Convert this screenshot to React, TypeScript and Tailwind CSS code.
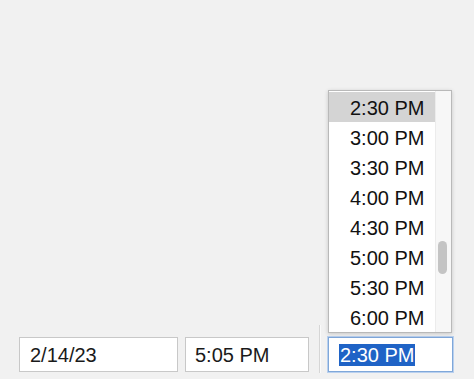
import React from "react";

const times = [
	"2:30 PM",
	"3:00 PM",
	"3:30 PM",
	"4:00 PM",
	"4:30 PM",
	"5:00 PM",
	"5:30 PM",
	"6:00 PM",
];

const font = { fontFamily: '"Liberation Sans", Arial, sans-serif' };

export default function App() {
	return (
		<div
			className="h-[379px] w-[474px] bg-[#f1f1f1] flex flex-col justify-end overflow-hidden"
			style={font}
		>
			<div className="flex items-start pl-[19px] pb-[6px]">
				<div className="mt-[12px] w-[159px] h-[35px] bg-white border border-[#c8c8c8] flex items-center pl-[10px] text-[20px] text-[#1a1a1a]">
					2/14/23
				</div>
				<div className="mt-[12px] ml-[7px] w-[124px] h-[35px] bg-white border border-[#c8c8c8] flex items-center pl-[9px] text-[20px] text-[#1a1a1a]">
					5:05 PM
				</div>
				<div className="ml-[10px] w-px h-[48px] bg-[#d6d6d6]"></div>
				<div className="w-px h-[48px] bg-[#fafafa]"></div>
				<div className="relative ml-[7px] mt-[12px]">
					<div className="absolute left-0 bottom-[39px] w-[124px] h-[243px] bg-white border border-[#b9b9b9] shadow-[0_1px_4px_rgba(0,0,0,0.18)] flex">
						<div className="flex-1 flex flex-col pt-px">
							{times.map((t, i) => (
								<div
									key={t}
									className={`h-[30px] flex items-center pl-[21px] pt-[2px] text-[20px] text-[#111] ${
										i === 0 ? "bg-[#d4d4d4]" : ""
									}`}
								>
									{t}
								</div>
							))}
						</div>
						<div className="w-[16px] bg-[#f7f7f7] border-l border-[#ececec] relative">
							<div className="absolute left-[2px] top-[150px] w-[9px] h-[33px] rounded-full bg-[#c4c4c4]"></div>
						</div>
					</div>
					<div className="w-[125px] h-[35px] bg-white border border-[#7fa7d9] shadow-[0_0_0_1px_#b9d0ee] flex items-center pl-[10px]">
						<span className="bg-[#1f63c6] text-white text-[20px] leading-[22px] px-px">
							2:30 PM
						</span>
					</div>
				</div>
			</div>
		</div>
	);
}
